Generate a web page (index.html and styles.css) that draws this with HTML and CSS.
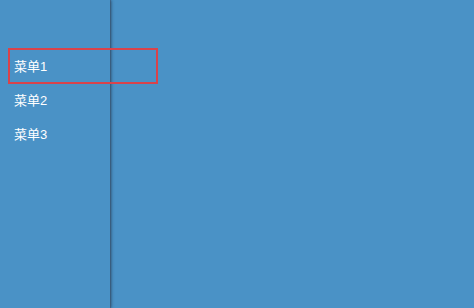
FILE: index.html
```html
<!DOCTYPE html>
<html>
<head>
<meta charset="utf-8">
<link rel="stylesheet" href="styles.css">
</head>
<body>
<div class="layout">
  <aside class="sidebar">
    <ul class="menu">
      <li class="item active">菜单1</li>
      <li class="item">菜单2</li>
      <li class="item">菜单3</li>
    </ul>
  </aside>
  <main class="content"></main>
</div>
</body>
</html>
```
FILE: styles.css
```css
html, body {
  margin: 0;
  padding: 0;
  width: 474px;
  height: 308px;
  overflow: hidden;
  background: #4a92c6;
  font-family: "Liberation Sans", "Noto Sans CJK SC", sans-serif;
}
.layout {
  display: flex;
  height: 308px;
}
.sidebar {
  width: 110px;
  flex: none;
  position: relative;
  z-index: 1;
  background: #4a92c6;
  box-shadow: 0 0 0 1px rgba(60, 90, 120, 0.6), 1px 0 3px rgba(30, 50, 75, 0.8);
}
.menu {
  list-style: none;
  margin: 0;
  padding: 48px 0 0 0;
}
.item {
  height: 34px;
  line-height: 34px;
  padding-left: 14px;
  color: #ffffff;
  font-size: 13px;
}
.item.active {
  box-sizing: border-box;
  width: 150px;
  height: 36px;
  line-height: 34px;
  margin-left: 8px;
  padding-left: 4px;
  border: 2px solid #d9434b;
  position: relative;
  z-index: 2;
}
.content {
  flex: 1;
}
```
